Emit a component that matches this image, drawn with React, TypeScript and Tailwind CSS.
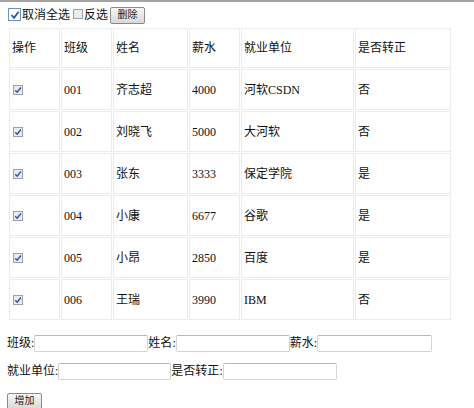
import React from 'react';

const rows = [
  ['001', '齐志超', '4000', '河软CSDN', '否'],
  ['002', '刘晓飞', '5000', '大河软', '否'],
  ['003', '张东', '3333', '保定学院', '是'],
  ['004', '小康', '6677', '谷歌', '是'],
  ['005', '小昂', '2850', '百度', '是'],
  ['006', '王瑞', '3990', 'IBM', '否'],
];

const headers = ['操作', '班级', '姓名', '薪水', '就业单位', '是否转正'];
const widths = ['w-[51px]', 'w-[51px]', 'w-[75px]', 'w-[51px]', 'w-[113px]', 'w-[96px]'];

function Check({ on = true, big = false }: { on?: boolean; big?: boolean }) {
  return (
    <span
      className={
        (big ? 'h-[13px] w-[13px] border-[#6d8fb8] bg-white ' : 'h-[10px] w-[10px] border-[#9aa3ad] bg-[#e9ecf0] ') +
        'relative inline-flex shrink-0 items-center justify-center border'
      }
    >
      {on && (
        <svg viewBox="0 0 10 10" className={big ? 'h-[10px] w-[10px]' : 'h-[8px] w-[8px]'}>
          <path d="M1.5 5.2 L4 7.8 L8.6 1.8" fill="none" stroke="#2a55b0" strokeWidth="1.8" />
        </svg>
      )}
    </span>
  );
}

function Btn({ children }: { children: React.ReactNode }) {
  return (
    <span className="inline-flex h-[17px] w-[35px] items-center justify-center rounded-[2px] border border-[#8a8a8a] bg-gradient-to-b from-[#f8f8f8] to-[#d8d8d8] text-[10px] leading-none text-[#222]">
      {children}
    </span>
  );
}

function Field({ label, w }: { label: string; w: string }) {
  return (
    <>
      <span>{label}:</span>
      <span className={w + ' inline-block h-[17px] rounded-[2px] border border-[#d4d4d4] border-t-[#b8b8b8] bg-white'} />
    </>
  );
}

export default function App() {
  return (
    <div
      className="h-[408px] w-[474px] overflow-hidden bg-white text-[12px] text-[#111]"
      style={{ fontFamily: '"Liberation Serif", "Noto Sans CJK SC", serif' }}
    >
      <div className="h-[2px] bg-[#a4a4a4]" />
      <div className="flex h-[24px] items-center pl-[8px] pt-[1px]">
        <Check big />
        <span className="ml-[1px]">取消全选</span>
        <span className="ml-[3px]">
          <Check on={false} />
        </span>
        <span className="ml-[1px]">反选</span>
        <span className="ml-[2px]">
          <Btn>删除</Btn>
        </span>
      </div>
      <table className="ml-[8px] mt-[1px] w-[444px] table-fixed border-separate border-spacing-[1px]">
        <thead>
          <tr>
            {headers.map((h, i) => (
              <th
                key={h}
                className={widths[i] + ' h-[40px] border border-[#ececec] pl-[2px] text-left align-middle text-[12px] font-normal'}
              >
                {h}
              </th>
            ))}
          </tr>
        </thead>
        <tbody>
          {rows.map((r) => (
            <tr key={r[0]}>
              <td className="h-[41px] border border-[#ececec] pl-[3px] align-middle">
                <span className="inline-flex">
                  <Check />
                </span>
              </td>
              {r.map((c, i) => (
                <td key={i} className="h-[41px] border border-[#ececec] pl-[2px] align-middle">
                  {c}
                </td>
              ))}
            </tr>
          ))}
        </tbody>
      </table>
      <div className="mt-[13px] flex h-[18px] items-center pl-[7px]">
        <Field label="班级" w="w-[114px]" />
        <Field label="姓名" w="w-[114px]" />
        <Field label="薪水" w="w-[115px]" />
      </div>
      <div className="mt-[10px] flex h-[18px] items-center pl-[7px]">
        <Field label="就业单位" w="w-[113px]" />
        <Field label="是否转正" w="w-[114px]" />
      </div>
      <div className="mt-[11px] pl-[7px]">
        <Btn>增加</Btn>
      </div>
    </div>
  );
}
